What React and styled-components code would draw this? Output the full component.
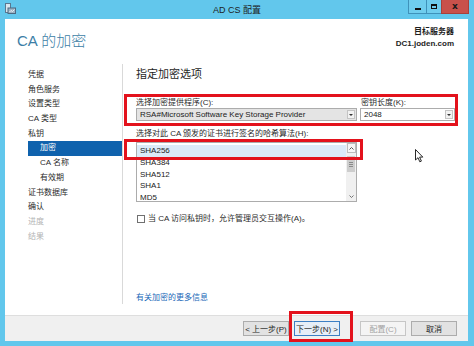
import React from "react";
import styled, { createGlobalStyle } from "styled-components";

const FONT = `"Liberation Sans", "Noto Sans CJK SC", sans-serif`;
const RED = "#e3121c";

const GlobalStyle = createGlobalStyle`
  html, body {
    margin: 0;
    padding: 0;
    background: #62c7ec;
  }
  body {
    font-family: ${FONT};
    color: #262626;
  }
`;

const Window = styled.div`
  position: relative;
  width: 474px;
  height: 346px;
  background: #62c7ec;
  display: flex;
  flex-direction: column;
  overflow: hidden;
`;

const TitleBar = styled.div`
  height: 19px;
  flex-shrink: 0;
  display: grid;
  grid-template-columns: 1fr auto 1fr;
  align-items: start;
`;

const AppIcon = styled.div`
  padding: 3px 0 0 5px;
  line-height: 0;
`;

const Title = styled.div`
  font-size: 9px;
  line-height: 20px;
  color: #1d1d1d;
`;

const Controls = styled.div`
  display: flex;
  justify-content: flex-end;
  padding-right: 5px;
`;

const CtrlBtn = styled.div`
  width: ${(p) => p.$w}px;
  height: 14px;
  box-sizing: border-box;
  display: flex;
  align-items: center;
  justify-content: center;
  background: ${(p) => (p.$close ? "#c8514b" : "#6fcdee")};
  border: 1px solid ${(p) => (p.$close ? "#a8403b" : "#3f92ba")};
  border-top: none;
  margin-left: -1px;
`;

const MinGlyph = styled.div`
  width: 6px;
  height: 2px;
  margin-top: 4px;
  background: #111;
`;

const MaxGlyph = styled.div`
  width: 6px;
  height: 5px;
  box-sizing: border-box;
  border: 1px solid #111;
  border-top-width: 2px;
`;

const CloseGlyph = styled.div`
  font-size: 9px;
  font-weight: bold;
  line-height: 1;
  color: #1a1a1a;
  font-family: "DejaVu Sans", sans-serif;
`;

const Client = styled.div`
  flex: 1;
  margin: 0 6px 5px 5px;
  background: #ffffff;
  display: flex;
  flex-direction: column;
`;

const Main = styled.div`
  flex: 1;
  display: flex;
  flex-direction: column;
  padding-bottom: 11px;
`;

const Header = styled.div`
  height: 45px;
  flex-shrink: 0;
  display: flex;
  justify-content: space-between;
  align-items: flex-start;
`;

const WizardTitle = styled.div`
  padding: 12px 0 0 12px;
  font-size: 15px;
  font-weight: 300;
  line-height: 20px;
  color: #3c7ea6;
`;

const ServerInfo = styled.div`
  padding: 7px 14px 0 0;
  text-align: right;
  font-size: 8px;
  font-weight: bold;
  line-height: 12px;
  color: #1e1e1e;
`;

const Body = styled.div`
  flex: 1;
  display: flex;
`;

const Nav = styled.div`
  width: 118px;
  box-sizing: border-box;
  border-right: 1px solid #d9d9d9;
  padding-top: 4px;
  flex-shrink: 0;
`;

const NavItem = styled.div`
  margin-left: 23px;
  padding-left: ${(p) => (p.$sub ? 12 : 0)}px;
  height: 14.7px;
  line-height: 14.7px;
  font-size: 8px;
  white-space: nowrap;
  color: ${(p) => (p.$active ? "#ffffff" : p.$off ? "#b4b4b4" : "#2b2b2b")};
  background: ${(p) => (p.$active ? "#0f62ad" : "transparent")};
`;

const Content = styled.div`
  flex: 1;
  display: flex;
  flex-direction: column;
  padding-left: 1px;
`;

const PageTitle = styled.div`
  margin-top: 1px;
  padding-left: 12px;
  font-size: 11px;
  line-height: 18px;
  color: #1f1f1f;
`;

const Highlight = styled.div`
  margin-top: 11px;
  width: 334px;
  box-sizing: border-box;
  border: 3px solid ${RED};
  padding: 0 0 2px 9px;
`;

const FieldRow = styled.div`
  display: flex;
  gap: 3px;
`;

const Field = styled.div`
  width: ${(p) => p.$w}px;
  display: flex;
  flex-direction: column;
`;

const Label = styled.div`
  font-size: 8px;
  line-height: 11px;
  white-space: nowrap;
  color: #2a2a2a;
  padding-left: ${(p) => p.$indent || 0}px;
  margin-top: ${(p) => p.$top || 0}px;
`;

const Combo = styled.div`
  height: 13px;
  box-sizing: border-box;
  border: 1px solid #acacac;
  background: ${(p) => (p.$gray ? "#e4e4e4" : "#ffffff")};
  display: flex;
  align-items: center;
  justify-content: space-between;
  padding-left: 3px;
  font-size: 8px;
  color: #222;
  white-space: nowrap;
  overflow: hidden;
`;

const DropBtn = styled.div`
  width: 8px;
  height: 9px;
  margin-right: 1px;
  box-sizing: border-box;
  border: 1px solid #c4c4c4;
  background: #f2f2f2;
  display: flex;
  align-items: center;
  justify-content: center;

  &::after {
    content: "";
    border-left: 2px solid transparent;
    border-right: 2px solid transparent;
    border-top: 2px solid #333;
  }
`;

const ListBox = styled.div`
  position: relative;
  margin: 3px 0 0 12px;
  width: 221px;
  height: 60px;
  box-sizing: border-box;
  border: 1px solid #acacac;
  display: flex;
`;

const ListRows = styled.div`
  flex: 1;
  padding-top: 2px;
  overflow: hidden;
`;

const ListRow = styled.div`
  height: 11.8px;
  line-height: 11.8px;
  padding-left: 3px;
  font-size: 8px;
  color: #222;
  background: ${(p) => (p.$selected ? "#dbeaf8" : "transparent")};
`;

const ScrollBar = styled.div`
  width: 10px;
  background: #f0f0f0;
  display: flex;
  flex-direction: column;
  align-items: center;
`;

const ScrollArrow = styled.div`
  width: 9px;
  height: 10px;
  box-sizing: border-box;
  display: flex;
  align-items: center;
  justify-content: center;
  border: ${(p) => (p.$boxed ? "1px solid #bcbcbc" : "none")};
  background: ${(p) => (p.$boxed ? "#f6f6f6" : "transparent")};
`;

const Thumb = styled.div`
  margin-top: 3px;
  width: 8px;
  height: 16px;
  background: #cdcdcd;
  display: flex;
  align-items: center;
  justify-content: center;

  &::after {
    content: "";
    width: 4px;
    height: 5px;
    background: repeating-linear-gradient(#8a8a8a 0 1px, transparent 1px 2px);
  }
`;

const ScrollSpacer = styled.div`
  flex: 1;
`;

const RedMark = styled.div`
  position: absolute;
  top: ${(p) => p.$t}px;
  left: ${(p) => p.$l}px;
  width: ${(p) => p.$w}px;
  height: ${(p) => p.$h}px;
  box-sizing: border-box;
  border: ${(p) => p.$b || 3}px solid ${RED};
  pointer-events: none;
`;

const CheckRow = styled.label`
  margin: 11px 0 0 13px;
  display: flex;
  align-items: center;
  gap: 3px;
  font-size: 8px;
  line-height: 12px;
  color: #2a2a2a;
  white-space: nowrap;
`;

const CheckBox = styled.span`
  width: 8px;
  height: 8px;
  box-sizing: border-box;
  border: 1px solid #707070;
  background: #fff;
`;

const MoreLink = styled.a`
  margin-top: auto;
  padding-left: 12px;
  font-size: 8px;
  line-height: 12px;
  color: #2168b8;
  text-decoration: none;
`;

const Footer = styled.div`
  height: 26px;
  flex-shrink: 0;
  box-sizing: border-box;
  border-top: 1px solid #dedede;
  background: #f0f0f0;
  display: flex;
  align-items: center;
  justify-content: flex-end;
  padding-right: 11px;
  gap: 5px;
`;

const Button = styled.div`
  position: relative;
  width: 46px;
  height: 15px;
  box-sizing: border-box;
  margin-left: ${(p) => (p.$gap ? 15 : 0)}px;
  display: flex;
  align-items: center;
  justify-content: center;
  font-size: 8px;
  white-space: nowrap;
  color: ${(p) => (p.$disabled ? "#a3a3a3" : "#1f1f1f")};
  background: ${(p) =>
    p.$disabled ? "#f4f4f4" : p.$default ? "#e6eef7" : "#e2e2e2"};
  border: 1px solid
    ${(p) => (p.$disabled ? "#c6c6c6" : p.$default ? "#3c7fc4" : "#acacac")};
`;

const Cursor = styled.svg`
  position: absolute;
  left: 415px;
  top: 149px;
`;

const NAV = [
  { label: "凭据" },
  { label: "角色服务" },
  { label: "设置类型" },
  { label: "CA 类型" },
  { label: "私钥" },
  { label: "加密", sub: true, active: true },
  { label: "CA 名称", sub: true },
  { label: "有效期", sub: true },
  { label: "证书数据库" },
  { label: "确认" },
  { label: "进度", off: true },
  { label: "结果", off: true },
];

const HASHES = ["SHA256", "SHA384", "SHA512", "SHA1", "MD5"];

const App = () => {
  return (
    <Window>
      <GlobalStyle />
      <TitleBar>
        <AppIcon>
          <svg width="11" height="11" viewBox="0 0 11 11">
            <rect x="0.5" y="0.5" width="5" height="9" fill="#d9e6ee" stroke="#5a7890" />
            <rect x="3" y="5" width="7.5" height="5.5" fill="#9cb4c6" stroke="#4d6880" />
            <path d="M4.5 9 L6 7.5 L7.5 8.5 L9.5 6.5" fill="none" stroke="#ffffff" strokeWidth="0.8" />
          </svg>
        </AppIcon>
        <Title>AD CS 配置</Title>
        <Controls>
          <CtrlBtn $w={19}>
            <MinGlyph />
          </CtrlBtn>
          <CtrlBtn $w={16}>
            <MaxGlyph />
          </CtrlBtn>
          <CtrlBtn $w={28} $close>
            <CloseGlyph>x</CloseGlyph>
          </CtrlBtn>
        </Controls>
      </TitleBar>

      <Client>
        <Main>
          <Header>
            <WizardTitle>CA 的加密</WizardTitle>
            <ServerInfo>
              <div>目标服务器</div>
              <div>DC1.joden.com</div>
            </ServerInfo>
          </Header>

          <Body>
            <Nav>
              {NAV.map((n) => (
                <NavItem key={n.label} $sub={n.sub} $active={n.active} $off={n.off}>
                  {n.label}
                </NavItem>
              ))}
            </Nav>

            <Content>
              <PageTitle>指定加密选项</PageTitle>

              <Highlight>
                <FieldRow>
                  <Field $w={221}>
                    <Label>选择加密提供程序(C):</Label>
                    <Combo $gray>
                      RSA#Microsoft Software Key Storage Provider
                      <DropBtn />
                    </Combo>
                  </Field>
                  <Field $w={95}>
                    <Label $indent={1}>密钥长度(K):</Label>
                    <Combo>
                      2048
                      <DropBtn />
                    </Combo>
                  </Field>
                </FieldRow>
              </Highlight>

              <Label $indent={12} $top={2}>
                选择对此 CA 颁发的证书进行签名的哈希算法(H):
              </Label>
              <ListBox>
                <ListRows>
                  {HASHES.map((h, i) => (
                    <ListRow key={h} $selected={i === 0}>
                      {h}
                    </ListRow>
                  ))}
                </ListRows>
                <ScrollBar>
                  <ScrollArrow $boxed>
                    <svg width="5" height="3" viewBox="0 0 5 3">
                      <path d="M0.5 2.5 L2.5 0.5 L4.5 2.5" fill="none" stroke="#444" strokeWidth="0.9" />
                    </svg>
                  </ScrollArrow>
                  <Thumb />
                  <ScrollSpacer />
                  <ScrollArrow>
                    <svg width="5" height="3" viewBox="0 0 5 3">
                      <path d="M0.5 0.5 L2.5 2.5 L4.5 0.5" fill="none" stroke="#666" strokeWidth="0.9" />
                    </svg>
                  </ScrollArrow>
                </ScrollBar>
                <RedMark $t={-4} $l={-13} $w={239} $h={21} />
              </ListBox>

              <CheckRow>
                <CheckBox />
                当 CA 访问私钥时，允许管理员交互操作(A)。
              </CheckRow>

              <MoreLink href="#">有关加密的更多信息</MoreLink>
            </Content>
          </Body>
        </Main>

        <Footer>
          <Button>&lt; 上一步(P)</Button>
          <Button $default>
            下一步(N) &gt;
            <RedMark $t={-11} $l={-6} $w={64} $h={31} />
          </Button>
          <Button $disabled $gap>
            配置(C)
          </Button>
          <Button>取消</Button>
        </Footer>
      </Client>

      <Cursor width="9" height="14" viewBox="0 0 9 14">
        <path
          d="M0.5 0.5 L0.5 11 L3 8.7 L4.8 12.8 L6.4 12.1 L4.6 8.1 L7.8 8.1 Z"
          fill="#ffffff"
          stroke="#111"
          strokeWidth="0.9"
          strokeLinejoin="round"
        />
      </Cursor>
    </Window>
  );
};

export default App;
